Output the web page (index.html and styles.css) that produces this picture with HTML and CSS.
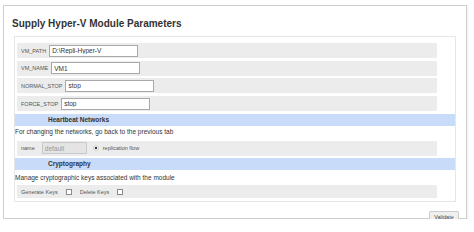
FILE: index.html
```html
<!DOCTYPE html>
<html>
<head>
  <title>Supply Hyper-V Module Parameters</title>
  <meta name="viewport" content="width=device-width, initial-scale=1.0">
  <link rel="stylesheet" href="styles.css">
</head>
<body>
  <div class="dialog">
    <h2 class="title">Supply Hyper-V Module Parameters</h2>
    <div class="panel">
      <div class="fields">
        <div class="row"><label>VM_PATH</label><input type="text" value="D:\Repli-Hyper-V"></div>
        <div class="row"><label>VM_NAME</label><input type="text" value="VM1"></div>
        <div class="row"><label>NORMAL_STOP</label><input type="text" value="stop"></div>
        <div class="row"><label>FORCE_STOP</label><input type="text" value="stop"></div>
      </div>

      <div class="section-head">Heartbeat Networks</div>
      <p class="note">For changing the networks, go back to the previous tab</p>
      <div class="fields">
        <div class="row">
          <label class="name-label">name</label>
          <input type="text" class="readonly" value="default" readonly>
          <span class="radio"></span>
          <label>replication flow</label>
        </div>
      </div>

      <div class="section-head">Cryptography</div>
      <p class="note note-crypto">Manage cryptographic keys associated with the module</p>
      <div class="fields last">
        <div class="row keys">
          <label>Generate Keys</label><span class="check"></span>
          <label>Delete Keys</label><span class="check"></span>
        </div>
      </div>
    </div>
    <button class="validate">Validate</button>
  </div>
</body>
</html>
```

FILE: styles.css
```css
body {
  font-family: "Liberation Sans", Arial, sans-serif;
  background-color: #ffffff;
  color: #333333;
  margin: 0;
  padding: 0;
}

.dialog {
  position: relative;
  box-sizing: border-box;
  width: 464px;
  height: 214px;
  margin: 5px 0 0 3px;
  border: 1px solid #cfcfcf;
  box-shadow: 1px 1px 2px rgba(0, 0, 0, 0.08);
}

.title {
  font-size: 10px;
  line-height: 12px;
  font-weight: bold;
  color: #333333;
  margin: 12px 0 6px 8px;
}

.panel {
  box-sizing: border-box;
  margin: 0 10px;
  height: 166px;
  border: 1px solid #e6e6e6;
}

.fields {
  padding: 0 18px 0 2px;
}

.panel > .fields:first-child {
  padding-top: 6px;
}

.row {
  display: flex;
  align-items: center;
  height: 15px;
  margin-bottom: 2.7px;
  padding-left: 4px;
  background-color: #ececec;
}

.row label {
  font-size: 5.5px;
  color: #555555;
  margin-right: 3px;
}

.row input {
  box-sizing: border-box;
  width: 89px;
  height: 12px;
  padding: 0 2px;
  border: 1px solid #a9a9a9;
  background: #ffffff;
  font-family: "Liberation Sans", Arial, sans-serif;
  font-size: 6.5px;
  color: #333333;
  outline: none;
}

.row .name-label {
  margin-right: 7px;
}

.row input.readonly {
  width: 45px;
  background: #e4e4e4;
  border-color: #c8c8c8;
  color: #999999;
  margin-right: 6px;
}

.radio {
  box-sizing: border-box;
  width: 6px;
  height: 6px;
  border-radius: 50%;
  border: 1px solid #d0d0d0;
  background: radial-gradient(circle, #333333 0 1.3px, #ffffff 1.6px);
  margin-right: 4px;
}

.check {
  box-sizing: border-box;
  width: 6px;
  height: 6px;
  border: 1px solid #8a8a8a;
  background: #ffffff;
  margin: 0 8px 0 5px;
}

.keys {
  height: 13px;
}

.section-head {
  height: 12px;
  line-height: 12px;
  margin-top: 2px;
  padding-left: 33px;
  background-color: #c8dbf8;
  font-size: 6.5px;
  font-weight: bold;
  color: #333333;
}

.note {
  font-size: 6.5px;
  line-height: 11px;
  margin: 0 0 4px 0;
  color: #333333;
}

.note-crypto {
  padding-top: 1.5px;
  margin-bottom: 2.5px;
}

.validate {
  position: absolute;
  right: 7px;
  bottom: -4px;
  width: 30px;
  height: 11px;
  padding: 0;
  font-family: "Liberation Sans", Arial, sans-serif;
  font-size: 5.5px;
  color: #444444;
  background: #f0f0f0;
  border: 1px solid #cccccc;
  border-radius: 1px;
}
```
